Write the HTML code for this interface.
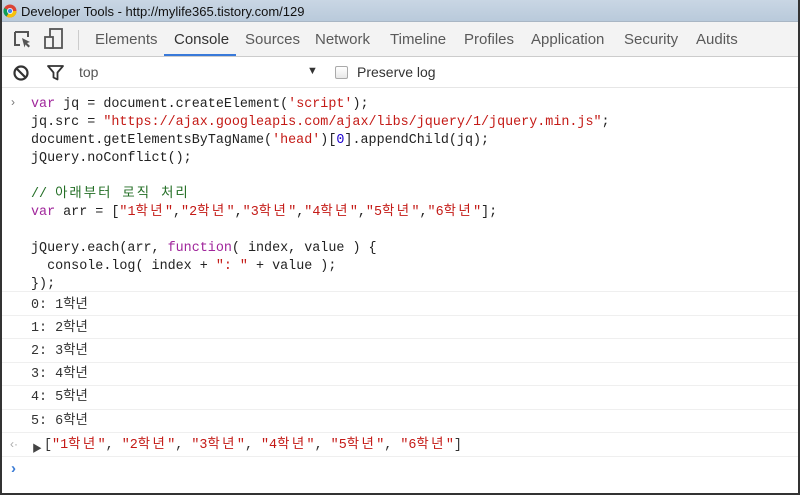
<!DOCTYPE html>
<html><head><meta charset="utf-8"><style>
*{margin:0;padding:0;box-sizing:border-box}
body{width:800px;height:495px;overflow:hidden;background:#fff;font-family:"Liberation Sans","Noto Sans CJK KR",sans-serif;position:relative}
.title{position:absolute;left:0;top:0;width:800px;height:22px;background:linear-gradient(#c9d6e4,#b9cadb);border-bottom:1px solid #a9b6c4}
.title span{position:absolute;left:21px;top:4px;font-size:13px;color:#111}
.tabs{position:absolute;left:0;top:22px;width:800px;height:35px;background:#f3f3f3;border-bottom:1px solid #ccc}
.tab{position:absolute;top:9px;font-size:15px;color:#5a5a5a}
.filter{position:absolute;left:0;top:57px;width:800px;height:31px;background:#fff;border-bottom:1px solid #e6e6e6}
.line{position:absolute;left:31px;font-family:"Liberation Mono","Noto Sans CJK KR",monospace;font-size:13.4px;color:#222;white-space:pre;line-height:18px}
.k{color:#a0269b}.s{color:#c41a16}.c{color:#236e25}.n{color:#1c00cf}
.h{letter-spacing:2.4px}
.sep{position:absolute;left:0;width:798px;height:1px;background:#efefef}
.frame{position:absolute;left:0;top:0;width:800px;height:495px;border-left:2px solid #333;border-right:2px solid #333;border-bottom:2px solid #333;pointer-events:none}
</style></head><body>
<div class="title">
<svg style="position:absolute;left:3px;top:4px" width="14" height="14" viewBox="0 0 14 14"><circle cx="7" cy="7" r="6.5" fill="#db4437"/><path d="M7 7 L13.5 7 A6.5 6.5 0 0 1 3.5 12.5Z" fill="#f4c20d"/><path d="M7 7 L3.5 12.5 A6.5 6.5 0 0 1 1.2 4Z" fill="#0f9d58"/><circle cx="7" cy="7" r="3" fill="#fff"/><circle cx="7" cy="7" r="2.2" fill="#4285f4"/></svg>
<span>Developer Tools - http://mylife365.tistory.com/129</span></div>
<div class="tabs">
<svg style="position:absolute;left:13px;top:8px" width="20" height="20" viewBox="0 0 20 20"><path d="M2 2h13v5M2 2v13h5" fill="none" stroke="#555" stroke-width="2"/><path d="M9 8l8 4-3 1 3 3-1.5 1.5-3-3-1 3z" fill="#555"/></svg>
<svg style="position:absolute;left:44px;top:6px" width="20" height="22" viewBox="0 0 20 22"><rect x="6" y="1" width="12" height="19" fill="none" stroke="#555" stroke-width="1.8"/><rect x="1" y="9" width="8" height="11" fill="#f3f3f3" stroke="#555" stroke-width="1.8"/></svg>
<div style="position:absolute;left:78px;top:8px;width:1px;height:20px;background:#ccc"></div>
<span class="tab" style="left:95px">Elements</span>
<span class="tab" style="left:174px;color:#333">Console</span>
<div style="position:absolute;left:164px;top:32px;width:72px;height:2px;background:#3879d9"></div>
<span class="tab" style="left:245px">Sources</span>
<span class="tab" style="left:315px">Network</span>
<span class="tab" style="left:390px">Timeline</span>
<span class="tab" style="left:464px">Profiles</span>
<span class="tab" style="left:531px">Application</span>
<span class="tab" style="left:624px">Security</span>
<span class="tab" style="left:696px">Audits</span>
</div>
<div class="filter">
<svg style="position:absolute;left:13px;top:8px" width="16" height="16" viewBox="0 0 16 16"><circle cx="8" cy="8" r="6.5" fill="none" stroke="#333" stroke-width="2.2"/><path d="M3.5 3.5l9 9" stroke="#333" stroke-width="2.2"/></svg>
<svg style="position:absolute;left:47px;top:8px" width="17" height="16" viewBox="0 0 17 16"><path d="M1 1h15l-5.5 6.5v7l-4-2v-5z" fill="none" stroke="#333" stroke-width="1.8" stroke-linejoin="round"/></svg>
<span style="position:absolute;left:79px;top:7px;font-size:14px;color:#555">top</span>
<span style="position:absolute;left:307px;top:8px;font-size:11px;color:#333">▼</span>
<div style="position:absolute;left:335px;top:9px;width:13px;height:13px;border:1px solid #aaa;border-radius:2px;background:linear-gradient(#fff,#e8e8e8)"></div>
<span style="position:absolute;left:357px;top:7px;font-size:14px;color:#333">Preserve log</span>
</div>
<span style="position:absolute;left:11px;top:95px;font-size:12px;color:#777">›</span>
<div class="line" style="top:96px"><span class="k">var</span> jq = document.createElement(<span class="s">'script'</span>);
jq.src = <span class="s">"https://ajax.googleapis.com/ajax/libs/jquery/1/jquery.min.js"</span>;
document.getElementsByTagName(<span class="s">'head'</span>)[<span class="n">0</span>].appendChild(jq);
jQuery.noConflict();

<span class="c">// <span style="letter-spacing:2px">아래부터 로직 처리</span></span>
<span class="k">var</span> arr = [<span class="s">"1<span class="h">학년</span>"</span>,<span class="s">"2<span class="h">학년</span>"</span>,<span class="s">"3<span class="h">학년</span>"</span>,<span class="s">"4<span class="h">학년</span>"</span>,<span class="s">"5<span class="h">학년</span>"</span>,<span class="s">"6<span class="h">학년</span>"</span>];

jQuery.each(arr, <span class="k">function</span>( index, value ) {
  console.log( index + <span class="s">": "</span> + value );
});</div>
<div class="sep" style="top:291px"></div>
<div class="line" style="top:297px;color:#333">0: 1학년</div>
<div class="sep" style="top:315px"></div>
<div class="line" style="top:320px;color:#333">1: 2학년</div>
<div class="sep" style="top:338px"></div>
<div class="line" style="top:343px;color:#333">2: 3학년</div>
<div class="sep" style="top:362px"></div>
<div class="line" style="top:366px;color:#333">3: 4학년</div>
<div class="sep" style="top:385px"></div>
<div class="line" style="top:389px;color:#333">4: 5학년</div>
<div class="sep" style="top:409px"></div>
<div class="line" style="top:413px;color:#333">5: 6학년</div>
<div class="sep" style="top:432px"></div>
<span style="position:absolute;left:10px;top:437px;font-size:12px;color:#aaa">‹·</span>
<span style="position:absolute;left:32px;top:440px;font-size:10px;color:#444">▶</span>
<div class="line" style="top:437px;left:44px;color:#333">[<span class="s">"1<span class="h">학년</span>"</span>, <span class="s">"2<span class="h">학년</span>"</span>, <span class="s">"3<span class="h">학년</span>"</span>, <span class="s">"4<span class="h">학년</span>"</span>, <span class="s">"5<span class="h">학년</span>"</span>, <span class="s">"6<span class="h">학년</span>"</span>]</div>
<div class="sep" style="top:456px"></div>
<span style="position:absolute;left:11px;top:460px;font-size:15px;font-weight:bold;color:#3a7bd5">›</span>
<div class="frame"></div>
</body></html>
